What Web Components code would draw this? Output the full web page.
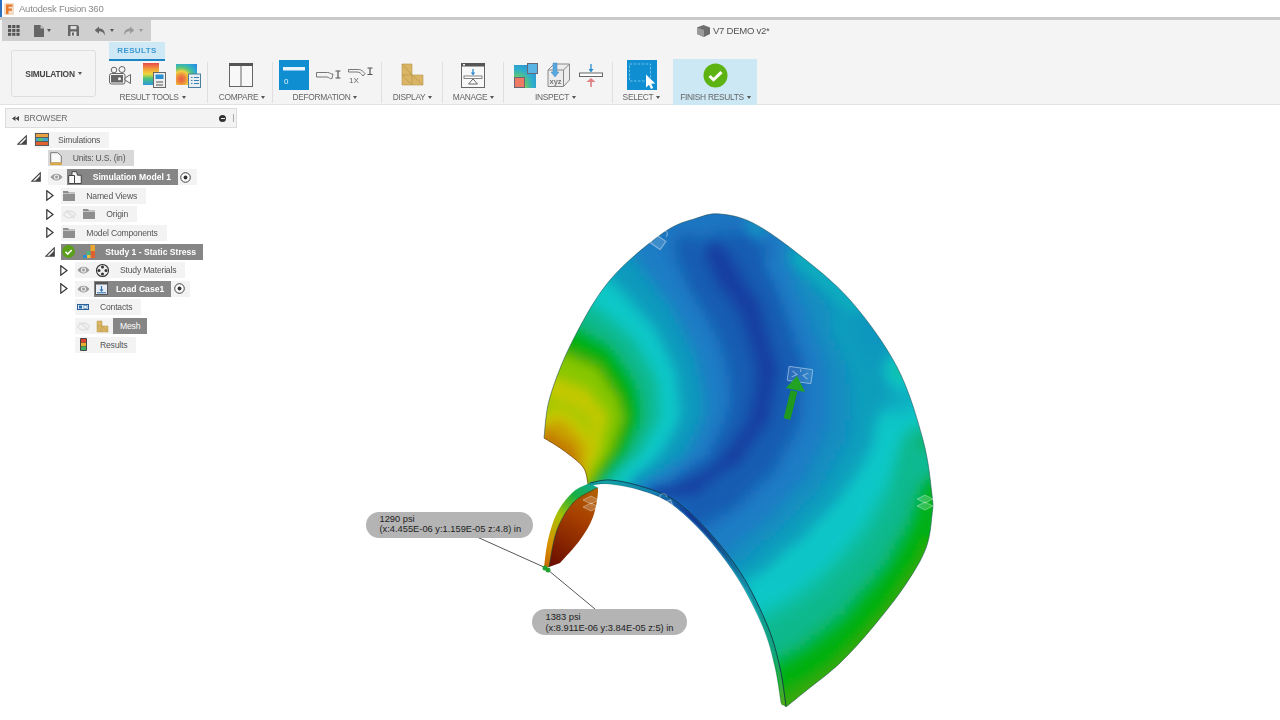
<!DOCTYPE html>
<html lang="en">
<head>
<meta charset="utf-8">
<title>Autodesk Fusion 360</title>
<style>
  html, body { margin: 0; height: 100%; background: #fff; overflow: hidden; font-family: "Liberation Sans", Arial, sans-serif; }
  body { display: flex; flex-direction: column; width: 1280px; height: 720px; }
</style>
</head>
<body>

<fx-titlebar>Autodesk Fusion 360</fx-titlebar>

<fx-toolbar doc="V7 DEMO v2*">
  <fx-icon slot="qat" name="grid" w="12" h="11" style="margin:0 14px 0 6px"></fx-icon>
  <fx-icon slot="qat" name="file" w="10" h="12" style="margin-right:3px"></fx-icon>
  <fx-caret slot="qat" style="margin-right:17px"></fx-caret>
  <fx-icon slot="qat" name="save" w="11" h="11" style="margin-right:15px"></fx-icon>
  <fx-icon slot="qat" name="undo" w="12" h="10" style="margin-right:4px"></fx-icon>
  <fx-caret slot="qat" style="margin-right:10px"></fx-caret>
  <fx-icon slot="qat" name="redo" w="11" h="10" style="margin-right:4px"></fx-icon>
  <fx-caret slot="qat" light></fx-caret>

  <ribbon-group label="RESULT TOOLS" w="103" gap="12" shift="-4" pull="4" sep>
    <fx-icon name="camera" w="22" h="19"></fx-icon>
    <fx-icon name="rainbow" w="23" h="25"></fx-icon>
    <fx-icon name="contour" w="25" h="25" style="margin-left:-2px"></fx-icon>
  </ribbon-group>
  <ribbon-group label="COMPARE" w="65" shift="1.5" sep>
    <fx-icon name="compare" w="24" h="24"></fx-icon>
  </ribbon-group>
  <ribbon-group label="DEFORMATION" w="109" gap="7" shift="-2.5" pull="4" sep>
    <fx-icon name="deform0" w="30" h="30"></fx-icon>
    <fx-icon name="deform1" w="25" h="12"></fx-icon>
    <fx-icon name="deform2" w="25" h="17"></fx-icon>
  </ribbon-group>
  <ribbon-group label="DISPLAY" w="61" sep>
    <fx-icon name="display" w="22" h="22"></fx-icon>
  </ribbon-group>
  <ribbon-group label="MANAGE" w="61" pull="1" sep>
    <fx-icon name="manage" w="24" h="25"></fx-icon>
  </ribbon-group>
  <ribbon-group label="INSPECT" w="109" gap="9" shift="-3" pull="1" sep>
    <fx-icon name="inspect1" w="24" h="25"></fx-icon>
    <fx-icon name="inspect2" w="23" h="24"></fx-icon>
    <fx-icon name="inspect3" w="24" h="23"></fx-icon>
  </ribbon-group>
  <ribbon-group label="SELECT" w="60" shift="-1.5" pull="2">
    <fx-icon name="select" w="30" h="30"></fx-icon>
  </ribbon-group>
  <ribbon-group label="FINISH RESULTS" w="84" shift=".5" active>
    <fx-icon name="finish" w="25" h="25"></fx-icon>
  </ribbon-group>
</fx-toolbar>

<fx-workspace>
  <sim-surface></sim-surface>
  <probe-label x="366" y="407" w="167" pad="1.5" value="1290 psi" at="(x:4.455E-06 y:1.159E-05 z:4.8) in"></probe-label>
  <probe-label x="532" y="504" w="155" pad="3" value="1383 psi" at="(x:8.911E-06 y:3.84E-05 z:5) in"></probe-label>

  <fx-browser>
    <tree-row level="0" exp="open"><tree-pill>
      <fx-icon name="sims" w="14" h="13" style="margin:0 9px 0 1px"></fx-icon><tree-text>Simulations</tree-text>
    </tree-pill></tree-row>
    <tree-row level="1"><tree-pill tone="grey">
      <fx-icon name="units" w="12" h="13" style="margin:0 11px 0 2px"></fx-icon><tree-text>Units: U.S. (in)</tree-text>
    </tree-pill></tree-row>
    <tree-row level="1" exp="open"><tree-pill>
      <fx-icon name="eye" w="13" h="8" style="margin:0 4px 0 2px"></fx-icon>
      <tree-pill tone="dark"><fx-icon name="model" w="14" h="13" style="margin:0 11px 0 1px"></fx-icon><tree-text bold>Simulation Model 1</tree-text></tree-pill>
      <fx-icon name="target" w="11" h="11" style="margin:0 -3px 0 2.5px"></fx-icon>
    </tree-pill></tree-row>
    <tree-row level="2" exp="closed"><tree-pill>
      <fx-icon name="folder" w="12" h="10" style="margin:0 11px 0 2px"></fx-icon><tree-text>Named Views</tree-text>
    </tree-pill></tree-row>
    <tree-row level="2" exp="closed"><tree-pill>
      <fx-icon name="eyeoff" w="13" h="9" style="margin:0 7px 0 2px"></fx-icon><fx-icon name="folder" w="12" h="10" style="margin-right:11px"></fx-icon><tree-text>Origin</tree-text>
    </tree-pill></tree-row>
    <tree-row level="2" exp="closed"><tree-pill>
      <fx-icon name="folder" w="12" h="10" style="margin:0 11px 0 2px"></fx-icon><tree-text>Model Components</tree-text>
    </tree-pill></tree-row>
    <tree-row level="2" exp="open"><tree-pill tone="dark">
      <fx-icon name="check" w="13" h="13" style="margin:0 8px 0 1px"></fx-icon><fx-icon name="study" w="12" h="13" style="margin-right:10px"></fx-icon><tree-text bold>Study 1 - Static Stress</tree-text>
    </tree-pill></tree-row>
    <tree-row level="3" exp="closed"><tree-pill>
      <fx-icon name="eye" w="13" h="8" style="margin:0 6px 0 2px"></fx-icon><fx-icon name="material" w="13" h="13" style="margin-right:11px"></fx-icon><tree-text>Study Materials</tree-text>
    </tree-pill></tree-row>
    <tree-row level="3" exp="closed"><tree-pill>
      <fx-icon name="eye" w="13" h="8" style="margin:0 4px 0 2px"></fx-icon>
      <tree-pill tone="dark"><fx-icon name="load" w="13" h="13" style="margin:0 8px 0 1px"></fx-icon><tree-text bold>Load Case1</tree-text></tree-pill>
      <fx-icon name="target" w="11" h="11" style="margin:0 -3.5px 0 2.5px"></fx-icon>
    </tree-pill></tree-row>
    <tree-row level="3"><tree-pill>
      <fx-icon name="contacts" w="12" h="6" style="margin:0 11px 0 2px"></fx-icon><tree-text>Contacts</tree-text>
    </tree-pill></tree-row>
    <tree-row level="3"><tree-pill flush>
      <fx-icon name="eyeoff" w="13" h="9" style="margin:0 7px 0 2px"></fx-icon><fx-icon name="mesh" w="11" h="11" style="margin-right:5px"></fx-icon>
      <tree-pill tone="dark" style="padding-left:7px"><tree-text>Mesh</tree-text></tree-pill>
    </tree-pill></tree-row>
    <tree-row level="3"><tree-pill>
      <fx-icon name="results" w="7" h="13" style="margin:0 13px 0 5px"></fx-icon><tree-text>Results</tree-text>
    </tree-pill></tree-row>
  </fx-browser>
</fx-workspace>

<script>
// iconos dibujados a mano, cada uno en su propia caja w x h
const ICONS = {
  grid: (() => { let s = ''; for (let y = 0; y < 3; y++) for (let x = 0; x < 3; x++) s += `<rect x="${x*4.2}" y="${y*3.9}" width="3.2" height="3" fill="#555"/>`; return s; })(),
  file: `<path d="M0 0h6.5L10 3.5V12H0z" fill="#666"/><path d="M6.5 0v3.5H10z" fill="#bbb"/>`,
  save: `<path d="M0 0h9.5L11 1.5V11H0z" fill="#666"/><rect x="2.5" y="1" width="6" height="3.2" fill="#ddd"/><rect x="2.5" y="6.5" width="6" height="4.5" fill="#ddd"/><rect x="4" y="7.5" width="2" height="3" fill="#666"/>`,
  undo: `<path d="M5 0.5L0.7 4.2 5 7.8V5.3c3 0 4.8 1 5.6 4.2 .9-4.3-1.6-7-5.6-7z" fill="#666"/>`,
  redo: `<path d="M6 0.5L10.3 4.2 6 7.8V5.3c-3 0-4.8 1-5.6 4.2C-.5 5.2 2 2.5 6 2.5z" fill="#999"/>`,
  camera: `<g fill="#f4f4f4" stroke="#666" stroke-width="1"><circle cx="5" cy="4" r="2.8"/><circle cx="13" cy="3.5" r="3"/><rect x=".5" y="7.5" width="15.5" height="10.5" rx="2"/><path d="M16 12l5.5-3.5v9L16 14z"/></g><rect x="2" y="9" width="12" height="7.5" fill="#666"/><circle cx="10.5" cy="12.7" r="1.5" fill="#f4f4f4"/>`,
  rainbow: `<defs><linearGradient id="rb" x1="0" y1="0" x2="0" y2="1"><stop offset="0" stop-color="#e8484a"/><stop offset=".28" stop-color="#f2a03a"/><stop offset=".5" stop-color="#f0d838"/><stop offset=".7" stop-color="#4cc47a"/><stop offset="1" stop-color="#2a98dc"/></linearGradient></defs><rect width="16" height="22" fill="url(#rb)"/><rect x="10.5" y="9.5" width="12" height="15" fill="#eee" stroke="#666"/><rect x="12.5" y="11.5" width="8" height="4.5" fill="#2a8ed0"/><path d="M13 19h7M13 22h7" stroke="#555"/>`,
  contour: `<defs><radialGradient id="ct" cx=".25" cy=".72" r=".95"><stop offset="0" stop-color="#e85a48"/><stop offset=".22" stop-color="#ee8a3c"/><stop offset=".4" stop-color="#eed040"/><stop offset=".58" stop-color="#58c47c"/><stop offset=".78" stop-color="#30b0c8"/><stop offset="1" stop-color="#2a8edc"/></radialGradient></defs><rect y="1" width="21" height="21" fill="url(#ct)"/><rect x="12.5" y="11" width="12" height="13.5" fill="#e8f0f5" stroke="#4b7f9d"/><path d="M15 14.500h1.500M18 14.500h5M15 17.500h1.500M18 17.500h5M15 20.500h1.500M18 20.500h5" stroke="#3a7fb0" stroke-width="1.1"/>`,
  compare: `<rect x=".5" y=".5" width="23" height="23" fill="#f8f8f8" stroke="#666"/><rect width="24" height="3" fill="#555"/><path d="M12 3v21" stroke="#666"/>`,
  deform0: `<rect width="30" height="30" fill="#0f8fd2"/><rect x="4" y="7" width="22" height="3.5" fill="#e8f4fb"/><text x="5" y="24" font-size="8" fill="#e8f4fb" font-family="Liberation Sans">0</text>`,
  deform1: `<path d="M.5 3.5h11c2.500 0 4 2 5.500 1.500l-1 4.500c-2 1-3-1.500-5-1.500H.5z" fill="#f4f4f4" stroke="#777"/><path d="M19.500 2h5M22 2v7M19.500 9h5" stroke="#555" stroke-width="1.200" fill="none"/>`,
  deform2: `<path d="M.5 2.500h10c3 0 5 2.500 6.500 4l-2 2.500c-2-2.500-3-4-6-4H.5z" fill="#f4f4f4" stroke="#777"/><path d="M19.500 1h5M22 1v6.500M19.500 7.500h5" stroke="#555" stroke-width="1.200" fill="none"/><text x="1" y="16" font-size="8" fill="#666" font-family="Liberation Sans">1X</text>`,
  display: `<path d="M0 0h10v11h11v10H0z" fill="#d9b565" stroke="#b8964a" stroke-width=".6"/><path d="M0 0l10 11M0 11h10v10M0 11l10 10M10 11l11 10" stroke="#b8964a" stroke-width=".7" fill="none"/>`,
  manage: `<rect x=".5" y=".5" width="23" height="24" fill="#f8f8f8" stroke="#666"/><rect width="24" height="3.500" fill="#555"/><rect x="2" y="1" width="2" height="1.500" fill="#eee"/><path d="M12 6v5" stroke="#2a8ed0" stroke-width="1.300"/><path d="M9.800 9.500h4.400L12 12.500z" fill="#2a8ed0"/><rect x="3" y="13" width="18" height="2.500" fill="#fff" stroke="#666" stroke-width=".8"/><path d="M12 16l4.500 5h-9z" fill="#fff" stroke="#666"/>`,
  inspect1: `<defs><radialGradient id="in" cx=".1" cy=".95" r="1.150"><stop offset="0" stop-color="#e85a48"/><stop offset=".22" stop-color="#eed040"/><stop offset=".42" stop-color="#58c47c"/><stop offset=".65" stop-color="#30b0c8"/><stop offset="1" stop-color="#2a8edc"/></radialGradient></defs><rect y="2" width="22" height="23" fill="url(#in)"/><rect x="13.500" y=".5" width="10" height="10" fill="#58b4e4" stroke="#667"/><rect x=".5" y="14.500" width="10" height="10" fill="#ee7a64" stroke="#667"/>`,
  inspect2: `<path d="M1 7l6-6h15.500v16l-6 6.500H1z" fill="#ececec" stroke="#888"/><path d="M1 7h15.500v16.500M16.500 7l6-6" fill="none" stroke="#888"/><path d="M6 0h4v9l2 0-4 5-4-5h2z" fill="#55a8e0" stroke="#4a88b8" stroke-width=".5"/><text x="2.500" y="21" font-size="7.500" font-weight="bold" fill="#777" font-family="Liberation Sans">xyz</text>`,
  inspect3: `<path d="M12 0v6" stroke="#2a8ed0" stroke-width="1.300"/><path d="M9.500 5h5L12 8.500z" fill="#2a8ed0"/><rect x=".5" y="9" width="23" height="3.500" fill="#fff" stroke="#666"/><path d="M12 23v-6" stroke="#d66060" stroke-width="1.300"/><path d="M7.500 18l4.500-4 4.500 4z" fill="#e08080"/>`,
  select: `<rect width="30" height="30" fill="#0f8fd2"/><rect x="2.500" y="4" width="21" height="17" fill="none" stroke="#7cc6ec" stroke-width=".9" stroke-dasharray="2.500 1.500"/><path d="M19 14.500v13l3-2.800 2 4.300 2.200-1-2-4.200 4-.2z" fill="#fff"/>`,
  finish: `<circle cx="12.500" cy="12.500" r="12" fill="#5db312"/><path d="M6.500 13l4 3.800 8-7.600" fill="none" stroke="#fff" stroke-width="3"/>`,
  box: `<path d="M0 2.500L6.500 0 13 2.500v6.500L7 12 0 9z" fill="#6d6d6d"/><path d="M0 2.500L7 5v7L0 9z" fill="#9a9a9a"/>`,
  sims: `<rect width="14" height="13" fill="#5a5a5a"/><rect x="1" y="1" width="12" height="3" fill="#e8a040"/><rect x="1" y="5" width="12" height="3" fill="#40a8d0"/><rect x="1" y="9" width="12" height="3" fill="#e06030"/><path d="M3 5h5v3H3z" fill="#50c080"/>`,
  units: `<path d="M.7.7h7L11.300 4v7H.7z" fill="#fafafa" stroke="#777"/><rect y="10.500" width="12" height="2.500" fill="#d9a94a"/>`,
  eye: `<path d="M.5 4C3.500-.500 9.500-.500 12.500 4 9.500 8.500 3.500 8.500.5 4z" fill="#9c9c9c"/><circle cx="6.500" cy="4" r="2.600" fill="#eee"/><circle cx="6.500" cy="4" r="1.500" fill="#9c9c9c"/>`,
  eyeoff: `<path d="M.5 4.500C3.500 0 9.500 0 12.500 4.500 9.500 9 3.500 9 .5 4.500z" fill="none" stroke="#ddd" stroke-width="1.200"/><path d="M2 .5l9 8M4 .5l8 7" stroke="#ddd"/>`,
  folder: `<path d="M0 0h5l1 1.500h6V10H0z" fill="#8e8e8e"/><path d="M0 2.500h12" stroke="#c4c4c4"/>`,
  model: `<path d="M.7 4.500h6V12.500H.7z" fill="#f8f8f8" stroke="#444"/><path d="M4 .7h4.500l1 3.500h3.800v8.300H6.500V4.500H4z" fill="#f8f8f8" stroke="#444"/>`,
  target: `<circle cx="5.500" cy="5.500" r="4.800" fill="#fafafa" stroke="#444"/><circle cx="5.500" cy="5.500" r="1.900" fill="#333"/>`,
  check: `<circle cx="6.500" cy="6.500" r="6.500" fill="#5a9e1a"/><path d="M3.500 6.800l2.200 2.200 4-4" fill="none" stroke="#fff" stroke-width="1.600"/>`,
  study: `<rect x="7.500" width="4.500" height="6" fill="#e8a830"/><rect x="7.500" y="6" width="4.500" height="7" fill="#e06030"/><rect x="3.500" y="6" width="4" height="4" fill="#50b080"/><rect y="10" width="4" height="3" fill="#2a8ed0"/><rect x="4" y="10" width="3.500" height="3" fill="#e8c040"/>`,
  material: `<circle cx="6.500" cy="6.500" r="6" fill="#eee" stroke="#333" stroke-width="1.100"/><g fill="#333"><circle cx="6.500" cy="3" r="1.500"/><circle cx="6.500" cy="10" r="1.500"/><circle cx="3" cy="6.500" r="1.500"/><circle cx="10" cy="6.500" r="1.500"/></g>`,
  load: `<rect x=".5" y=".5" width="12" height="12" fill="#e8eef4" stroke="#555"/><rect width="13" height="2.500" fill="#555"/><path d="M6.500 4v5" stroke="#2a70b0" stroke-width="1.200"/><path d="M4.500 7.500h4L6.500 10z" fill="#2a70b0"/><path d="M2 10.800h9" stroke="#2a70b0"/>`,
  contacts: `<rect x=".5" y=".5" width="11" height="5" fill="#dfeaf4" stroke="#2a5f98"/><rect x="2" y="1.500" width="3" height="3" fill="#2a70b0"/><rect x="7" y="1.500" width="3" height="3" fill="#fff" stroke="#2a70b0" stroke-width=".6"/>`,
  mesh: `<path d="M0 0h5v5h6v6H0z" fill="#d9b565" stroke="#b8964a" stroke-width=".5"/><path d="M0 5h5v6M5 5l6 6M0 5l5 6" stroke="#b8964a" stroke-width=".5" fill="none"/>`,
  results: `<rect width="7" height="13" rx="1" fill="#444"/><rect x="1" y="1" width="5" height="3.500" fill="#e04030"/><rect x="1" y="4.800" width="5" height="3.500" fill="#e8b030"/><rect x="1" y="8.600" width="5" height="3.500" fill="#40b060"/>`
};

function shadow(el, html) {
  el.attachShadow({ mode: 'open' }).innerHTML = html;
}

class FxIcon extends HTMLElement {
  connectedCallback() {
    const w = this.getAttribute('w'), h = this.getAttribute('h');
    shadow(this, `<style>:host{display:inline-flex;flex:none;width:${w}px;height:${h}px}svg{display:block;overflow:visible}</style>
      <svg width="${w}" height="${h}" viewBox="0 0 ${w} ${h}">${ICONS[this.getAttribute('name')] || ''}</svg>`);
  }
}

class FxCaret extends HTMLElement {
  connectedCallback() {
    const c = this.hasAttribute('light') ? '#999' : '#555';
    shadow(this, `<style>:host{display:inline-block;flex:none;width:0;height:0;border:solid transparent;border-width:3px 2.5px 0;border-top-color:${c}}</style>`);
  }
}

class FxTitlebar extends HTMLElement {
  connectedCallback() {
    shadow(this, `<style>
      :host{display:flex;flex:none;align-items:center;height:17px;position:relative;background:#fff;color:#8a8a8a;font-size:9.600px;letter-spacing:-.3px;filter:blur(.3px)}
      .edge{position:absolute;left:0;top:0;width:1.500px;height:25px;background:#2a6fc0;z-index:2}
      svg{margin:0 5px 0 4px}
    </style>
    <span class="edge"></span>
    <svg width="10" height="12" viewBox="0 0 10 12"><rect width="10" height="12" rx="1" fill="#f2dcc8"/><path d="M2 1.500h6.500v2.300H4.500v1.700h3.300v2.200H4.500v3.300H2z" fill="#e8792a"/></svg>
    <slot></slot>`);
  }
}

class FxToolbar extends HTMLElement {
  connectedCallback() {
    shadow(this, `<style>
      :host{display:block;flex:none;background:#f4f4f4;border-top:3px solid #c9c9c9;border-bottom:1px solid #e2e2e2;height:84px;position:relative;z-index:1;filter:blur(.3px)}
      .top{display:flex;align-items:center;height:21px}
      .qat{display:flex;align-items:center;height:21px;width:149px;margin-left:2px;background:#cfcfcf}
      .doc{display:flex;align-items:center;gap:3px;margin-left:546px;color:#555;font-size:9.600px;letter-spacing:-.3px}
      .main{display:flex;height:64px}
      .mode{flex:none;box-sizing:border-box;width:85px;height:47px;margin:9px 9px 0 11px;border:1px solid #dedede;border-radius:3px;display:flex;align-items:center;justify-content:center;gap:3px;color:#444;font-size:8.400px;letter-spacing:-.2px;font-weight:bold}
      .col{display:flex;flex-direction:column}
      .tabs{height:18px;padding:1px 0 0 4px;box-sizing:border-box}
      .tab{box-sizing:border-box;width:56px;height:19px;background:#cfe8f5;border-bottom:2px solid #1a86c6;color:#3c9ad2;font-size:8px;font-weight:bold;letter-spacing:.4px;display:flex;align-items:center;justify-content:center;position:relative;z-index:1}
      .groups{display:flex;height:46px}
    </style>
    <div class="top">
      <div class="qat"><slot name="qat"></slot></div>
      <div class="doc"><fx-icon name="box" w="13" h="12"></fx-icon>${this.getAttribute('doc')}</div>
    </div>
    <div class="main">
      <div class="mode">SIMULATION <fx-caret></fx-caret></div>
      <div class="col">
        <div class="tabs"><div class="tab">RESULTS</div></div>
        <div class="groups"><slot></slot></div>
      </div>
    </div>`);
  }
}

class RibbonGroup extends HTMLElement {
  connectedCallback() {
    const w = this.getAttribute('w'), gap = this.getAttribute('gap') || 0, shift = this.getAttribute('shift') || 0, pull = this.getAttribute('pull') || 0;
    shadow(this, `<style>
      :host{display:flex;flex:none;flex-direction:column;box-sizing:border-box;width:${w}px;height:46px;position:relative;
        ${this.hasAttribute('active') ? 'background:#cde8f5;' : ''}}
      .icons{display:flex;align-items:center;justify-content:center;gap:${gap}px;height:32px;padding-right:${pull}px}
      .label{display:flex;align-items:center;justify-content:center;gap:3px;height:12px;margin-left:${shift * 2}px;color:#666;font-size:8.400px;letter-spacing:-.3px;white-space:nowrap}
      .sep{position:absolute;right:0;top:3px;bottom:2px;width:1px;background:#dfdfdf}
    </style>
    <div class="icons"><slot></slot></div>
    <div class="label">${this.getAttribute('label')}<fx-caret></fx-caret></div>
    ${this.hasAttribute('sep') ? '<span class="sep"></span>' : ''}`);
  }
}

class FxWorkspace extends HTMLElement {
  connectedCallback() {
    shadow(this, `<style>:host{display:block;flex:1;position:relative;overflow:hidden;background:#fff}</style><slot></slot>`);
  }
}

class FxBrowser extends HTMLElement {
  connectedCallback() {
    shadow(this, `<style>
      :host{position:absolute;left:5px;top:3px;width:232px;display:flex;flex-direction:column;filter:blur(.3px)}
      .head{box-sizing:border-box;height:20px;background:#f3f3f3;border:1px solid #dcdcdc;display:flex;align-items:center;color:#6a6a6a;font-size:8.600px;letter-spacing:-.15px;margin-bottom:2.500px}
      .back{margin:0 5px 0 6px;display:block}
      .min{margin-left:auto;width:7px;height:7px;border-radius:50%;background:#333;position:relative;margin-right:1px}
      .min::after{content:"";position:absolute;left:1.500px;right:1.500px;top:3px;height:1px;background:#eee}
      .bar{width:1px;height:8px;background:#aaa;margin:0 2px 0 6px}
    </style>
    <div class="head">
      <svg class="back" width="7" height="5" viewBox="0 0 7 5"><path d="M3.500 0v5L0 2.500zM7 0v5L3.500 2.500z" fill="#444"/></svg>
      BROWSER<span class="min"></span><span class="bar"></span>
    </div>
    <slot></slot>`);
  }
}

class TreeRow extends HTMLElement {
  connectedCallback() {
    const lvl = +this.getAttribute('level'), exp = this.getAttribute('exp');
    const glyph = exp === 'open'
      ? `<svg width="10" height="10" viewBox="0 0 10 10"><path d="M9.300.8v8.500H.8z" fill="#fff" stroke="#444" stroke-width="1.100"/><path d="M9 4v5H4z" fill="#444"/></svg>`
      : exp === 'closed'
      ? `<svg width="8" height="11" viewBox="0 0 8 11"><path d="M.8.8l6.200 4.700L.8 10.200z" fill="#fff" stroke="#333" stroke-width="1.200"/></svg>`
      : '';
    const left = 12 + lvl * 13.67;
    const pad = exp === 'closed' ? 2 : (lvl > 1 ? 1 : 0);
    shadow(this, `<style>
      :host{display:flex;align-items:center;height:18.64px;padding-left:${left}px}
      .exp{flex:none;width:17px;display:flex;align-items:center;padding-left:${pad}px;box-sizing:border-box}
    </style><span class="exp">${glyph}</span><slot></slot>`);
  }
}

class TreePill extends HTMLElement {
  connectedCallback() {
    const tone = this.getAttribute('tone');
    const bg = tone === 'dark' ? '#868686' : tone === 'grey' ? '#d8d8d8' : '#f3f3f3';
    const fg = tone === 'dark' ? '#fff' : '#555';
    const padR = this.hasAttribute('flush') ? 0 : 9;
    shadow(this, `<style>
      :host{display:inline-flex;align-items:center;height:16px;padding-right:${padR}px;background:${bg};color:${fg}}
      :host([tone=dark]){padding-right:7px}
    </style><slot></slot>`);
  }
}

class TreeText extends HTMLElement {
  connectedCallback() {
    const bold = this.hasAttribute('bold');
    shadow(this, `<style>:host{display:inline-block;font-size:8.600px;letter-spacing:${bold ? 0 : -.2}px;white-space:nowrap;${bold ? 'font-weight:bold;' : ''}}</style><slot></slot>`);
  }
}

class ProbeLabel extends HTMLElement {
  connectedCallback() {
    const a = n => this.getAttribute(n);
    shadow(this, `<style>
      :host{position:absolute;left:${a('x')}px;top:${a('y')}px;width:${a('w')}px;height:26px;box-sizing:border-box;padding:${a('pad')}px 0 0 13.500px;background:#b4b4b4;border-radius:13px;color:#222;font-size:9.300px;line-height:10.500px;white-space:nowrap}
    </style><div>${a('value')}</div><div>${a('at')}</div>`);
  }
}

// curva suave (catmull-rom) a partir de puntos de la captura
function curve(pts, move = true) {
  let d = move ? `M${pts[0][0]} ${pts[0][1]}` : `L${pts[0][0]} ${pts[0][1]}`;
  for (let i = 0; i < pts.length - 1; i++) {
    const p0 = pts[i - 1] || pts[i], p1 = pts[i], p2 = pts[i + 1], p3 = pts[i + 2] || p2;
    d += `C${(p1[0] + (p2[0] - p0[0]) / 6).toFixed(1)} ${(p1[1] + (p2[1] - p0[1]) / 6).toFixed(1)} ${(p2[0] - (p3[0] - p1[0]) / 6).toFixed(1)} ${(p2[1] - (p3[1] - p1[1]) / 6).toFixed(1)} ${p2[0]} ${p2[1]}`;
  }
  return d;
}

const OUTER = [[544,438],[550,397],[573,340],[610,280],[663,233],[697,218],[720,214],[753,223],[797,253],[850,300],[897,367],[923,440],[932,495],[932,515],[926,548],[906,584],[873,627],[840,663],[807,690],[786,707]];
const INNER = [[781,703],[775,667],[763,627],[737,577],[703,533],[670,503],[640,490],[610,484],[588,484]];
const NOTCH = [[588,484],[583,467],[563,450],[544,438]];
const RIDGE = [[786,706],[780,668],[768,627],[742,575],[708,531],[674,500],[640,486],[610,480],[590,483]];

// mapa de tensiones: valor de cada isolínea leída de la captura
const ISO = [
  [0, [[712,250],[725,275],[748,305],[765,367],[757,413],[730,453],[690,482],[650,490]]],
  [0.5, [[682,238],[697,280],[724,325],[740,370],[737,415],[712,455],[675,478]]],
  [0.5, [[742,240],[764,285],[790,360],[785,415],[762,460],[725,495],[692,512]]],
  [1, [[640,245],[672,290],[700,340],[715,400],[700,450],[665,475],[635,484]]],
  [1, [[770,262],[795,305],[815,370],[815,420],[795,470],[760,510],[722,540]]],
  [1.3, [[800,285],[838,370],[838,430],[812,480],[775,520],[740,550]]],
  [1.5, [[620,265],[658,310],[682,360],[692,410],[675,450],[635,478]]],
  [1.6, [[835,320],[860,380],[860,440],[830,490],[790,530],[755,562]]],
  [2, [[885,420],[870,470],[847,497],[820,530],[790,555],[757,585]]],
  [2.5, [[910,440],[895,510],[870,555],[830,600],[790,630],[768,640]]],
  [3, [[932,487],[910,553],[873,603],[827,650],[787,673]]],
  [3.3, [[928,545],[905,585],[873,627],[840,663],[807,690],[786,705]]],
  [0.9, [[663,236],[690,222],[720,216]]],
  [1.4, [[753,226]]], [1.75, [[797,256],[850,302]]], [2.3, [[897,369]]], [2.7, [[923,440]]],
  [2, [[600,290],[643,333],[663,373],[667,413],[647,450],[607,482]]],
  [2.5, [[585,318],[622,345],[645,380],[648,415],[632,448],[598,483]]],
  [3, [[573,340],[600,352],[620,385],[627,415],[618,445],[590,484]]],
  [4, [[560,362],[590,372],[610,398],[616,415],[605,445],[586,478]]],
  [4.6, [[552,385],[580,395],[598,415],[592,450],[582,468]]],
  [5, [[556,425],[582,448]]],
  [5.5, [[546,436],[565,448],[583,470]]]
];
const RAMP = [[0,'#113a9f'],[1,'#1c7cc4'],[1.6,'#0a9fbc'],[2,'#0cc8c8'],[2.5,'#0ab88c'],[3,'#00b010'],[3.3,'#3ba80a'],[4,'#8cc800'],[4.6,'#ccc800'],[5.5,'#c26a00']]
  .map(([v, c]) => [v, parseInt(c.slice(1, 3), 16), parseInt(c.slice(3, 5), 16), parseInt(c.slice(5, 7), 16)]);

function rampColor(v) {
  let i = 0;
  while (i < RAMP.length - 2 && v > RAMP[i + 1][0]) i++;
  const a = RAMP[i], b = RAMP[i + 1];
  const t = Math.max(0, Math.min(1, (v - a[0]) / (b[0] - a[0])));
  return `rgb(${[1, 2, 3].map(k => Math.round(a[k] + (b[k] - a[k]) * t)).join(',')})`;
}

function fieldCells() {
  const samples = [];
  ISO.forEach(([v, pts]) => {
    if (pts.length === 1) samples.push([pts[0][0], pts[0][1], v]);
    for (let i = 0; i < pts.length - 1; i++) {
      const n = Math.max(1, Math.round(Math.hypot(pts[i + 1][0] - pts[i][0], pts[i + 1][1] - pts[i][1]) / 9));
      for (let k = 0; k <= n; k++) samples.push([pts[i][0] + (pts[i + 1][0] - pts[i][0]) * k / n, pts[i][1] + (pts[i + 1][1] - pts[i][1]) * k / n, v]);
    }
  });
  const cell = 5;
  let out = '';
  for (let y = 195; y < 725; y += cell) {
    for (let x = 525; x < 950; x += cell) {
      let sum = 0, tot = 0;
      for (const s of samples) {
        const d2 = (s[0] - x) ** 2 + (s[1] - y) ** 2 + 9;
        const w = Math.pow(d2, -1.5);
        sum += w * s[2]; tot += w;
      }
      out += `<rect x="${x}" y="${y}" width="${cell + .5}" height="${cell + .5}" fill="${rampColor(sum / tot)}"/>`;
    }
  }
  return out;
}

const lock = (x, y, r) => `<g transform="translate(${x} ${y}) rotate(${r})" fill="none" stroke="#fff" stroke-opacity=".35" stroke-width="1.300"><rect x="-6" y="0" width="12" height="10" fill="#fff" fill-opacity=".15"/><path d="M-3.500 0v-5a3.500 3.500 0 0 1 7 0v1"/></g>`;
const cube = (x, y) => `<g transform="translate(${x} ${y})" fill="#fff" fill-opacity=".2" stroke="#fff" stroke-opacity=".35"><path d="M0 -4l8 4-8 4-8-4z"/><path d="M0 -11l8 4-8 4-8-4z"/></g>`;

class SimSurface extends HTMLElement {
  connectedCallback() {
    const outline = curve(OUTER) + curve(INNER, false) + curve(NOTCH, false) + 'Z';
    const flapOut = [[590,483],[573,492],[557,513],[548,540],[544,567]];
    const flapIn = [[549,567],[557,530],[573,503],[593,490],[598,488]];
    const flapRed = [[549,567],[557,530],[573,503],[593,490],[598,491],[593,517],[580,540],[560,563]];
    shadow(this, `<style>:host{position:absolute;inset:0;display:block}svg{display:block}</style>
    <svg width="1280" height="615" viewBox="0 105 1280 615">
      <defs>
        <filter id="soft" x="-5%" y="-5%" width="110%" height="110%"><feGaussianBlur stdDeviation="5"/></filter>
        <clipPath id="shape"><path d="${outline}"/></clipPath>
        <linearGradient id="band" gradientUnits="userSpaceOnUse" x1="592" y1="483" x2="785" y2="705">
          <stop offset="0" stop-color="#10a8a8"/><stop offset=".16" stop-color="#1280b0"/><stop offset=".3" stop-color="#12389a"/><stop offset=".42" stop-color="#14488c"/><stop offset=".62" stop-color="#1590a8"/><stop offset=".85" stop-color="#10a878"/><stop offset="1" stop-color="#4fae12"/>
        </linearGradient>
        <linearGradient id="flap" gradientUnits="userSpaceOnUse" x1="600" y1="482" x2="545" y2="566">
          <stop offset="0" stop-color="#10a8a8"/><stop offset=".25" stop-color="#18b040"/><stop offset=".5" stop-color="#a8c000"/><stop offset=".8" stop-color="#d89000"/><stop offset="1" stop-color="#c86800"/>
        </linearGradient>
        <linearGradient id="red" gradientUnits="userSpaceOnUse" x1="595" y1="490" x2="552" y2="566">
          <stop offset="0" stop-color="#b06000"/><stop offset=".35" stop-color="#a84000"/><stop offset="1" stop-color="#6a0e00"/>
        </linearGradient>
      </defs>

      <g clip-path="url(#shape)"><g filter="url(#soft)" shape-rendering="crispEdges">${fieldCells()}</g></g>

      <path d="${curve(flapOut)}${curve(flapIn, false)}Z" fill="url(#flap)"/>
      <path d="${curve(flapRed)}Z" fill="url(#red)"/>
      <path d="${curve([[783.500,705],[778,667],[766,627],[740,576],[706,532],[672,501],[640,488],[610,482],[590,484]])}" fill="none" stroke="url(#band)" stroke-width="3.500"/>

      <path d="${curve(OUTER)}" fill="none" stroke="#1d4f58" stroke-width=".8" stroke-opacity=".7"/>
      <path d="${curve(NOTCH)}" fill="none" stroke="#6a3a00" stroke-width=".7"/>
      <path d="${curve(RIDGE)}" fill="none" stroke="#11384a" stroke-width=".9"/>
      <path d="${curve(flapIn)}" fill="none" stroke="#33401a" stroke-width=".8"/>
      <path d="M786 707L781 703${curve(INNER, false)}" fill="none" stroke="#1d4f58" stroke-width=".6" stroke-opacity=".6"/>

      ${lock(661, 238, 35)} ${lock(665, 502, -20)}
      ${cube(591, 507)} ${cube(925, 506)}
      <g transform="translate(800 375) rotate(8)" fill="#fff" fill-opacity=".1" stroke="#cfe6f5" stroke-opacity=".55" stroke-width="1"><rect x="-12" y="-7" width="24" height="14" rx="1"/><path d="M-8 -3l5 3-5 3M8 -3l-5 3 5 3M0 -6v3" fill="none"/></g>

      <path d="M787 419L794 391" stroke="#1f9a1f" stroke-width="7"/>
      <path d="M797 376L805 392 786 388z" fill="#23a323"/>

      <path d="M477 537L546 568M595 609L548 570" stroke="#444" stroke-width=".9"/>
      <circle cx="545" cy="568" r="2.500" fill="#22a030"/><circle cx="548" cy="570" r="2.500" fill="#22a030"/>
    </svg>`);
  }
}

customElements.define('fx-icon', FxIcon);
customElements.define('fx-caret', FxCaret);
customElements.define('fx-titlebar', FxTitlebar);
customElements.define('fx-toolbar', FxToolbar);
customElements.define('ribbon-group', RibbonGroup);
customElements.define('fx-workspace', FxWorkspace);
customElements.define('fx-browser', FxBrowser);
customElements.define('tree-row', TreeRow);
customElements.define('tree-pill', TreePill);
customElements.define('tree-text', TreeText);
customElements.define('probe-label', ProbeLabel);
customElements.define('sim-surface', SimSurface);
</script>
</body>
</html>
